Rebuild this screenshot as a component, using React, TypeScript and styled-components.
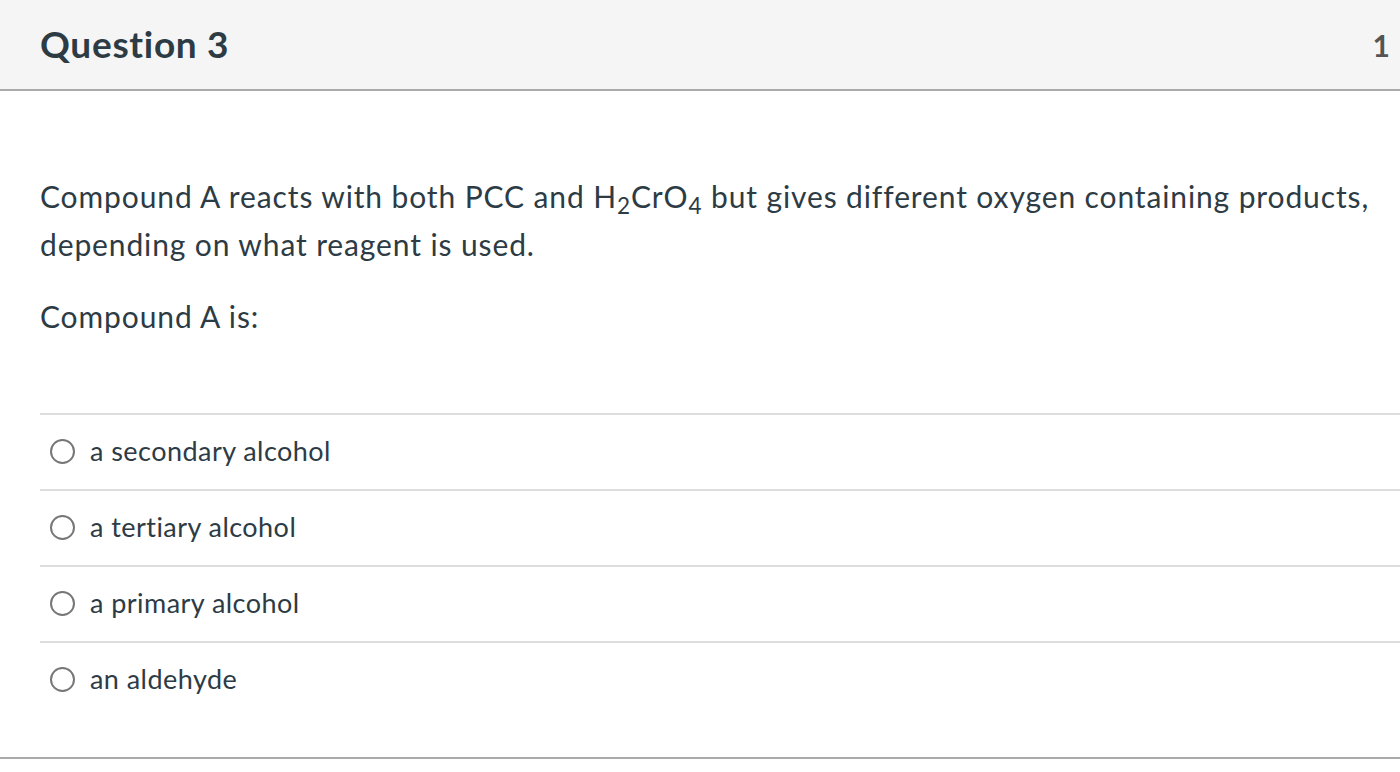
import React from "react";
import styled, { createGlobalStyle } from "styled-components";

const GlobalStyle = createGlobalStyle`
  html, body {
    margin: 0;
    padding: 0;
    background: #ffffff;
    font-family: Lato, "Liberation Sans", sans-serif;
    color: #2d3b45;
  }
`;

const Page = styled.div`
  width: 1400px;
  overflow: hidden;
`;

const Header = styled.div`
  height: 89px;
  background: #f5f5f5;
  border-bottom: 2px solid #aaaaaa;
  display: flex;
  align-items: center;
  justify-content: space-between;
  padding: 0 10px 0 40px;
`;

const Title = styled.h2`
  margin: 0;
  font-size: 37px;
  font-weight: 700;
  letter-spacing: 0.7px;
  color: #2d3b45;
  position: relative;
  top: -1px;
`;

const Points = styled.span`
  font-size: 30px;
  font-weight: 700;
  color: #555555;
`;

const Body = styled.div`
  padding: 81px 0 0 40px;
  border-bottom: 2px solid #aaaaaa;
`;

const Text = styled.p`
  margin: 0 0 24px;
  font-size: 30px;
  line-height: 48px;
  letter-spacing: 0.88px;
  padding-right: 10px;
`;

const Sub = styled.sub`
  font-size: 0.75em;
  line-height: 0;
  vertical-align: -0.25em;
`;

const Answers = styled.div`
  margin-top: 73px;
  padding-bottom: 40px;
`;

const Answer = styled.label`
  display: flex;
  align-items: center;
  gap: 15px;
  height: 70px;
  padding: 0 0 4px 10px;
  border-top: 2px solid #dddddd;
  font-size: 27px;
  letter-spacing: 0.45px;
  cursor: pointer;
`;

const Radio = styled.span`
  width: 21px;
  height: 21px;
  border: 2px solid #777777;
  border-radius: 50%;
  flex: none;
  margin-top: 3px;
`;

const answers = [
  "a secondary alcohol",
  "a tertiary alcohol",
  "a primary alcohol",
  "an aldehyde",
];

export default function App() {
  return (
    <>
      <GlobalStyle />
      <Page>
        <Header>
          <Title>Question 3</Title>
          <Points>1</Points>
        </Header>
        <Body>
          <Text>
            Compound A reacts with both PCC and H<Sub>2</Sub>CrO<Sub>4</Sub> but
            gives different oxygen containing products, depending on what
            reagent is used.
          </Text>
          <Text>Compound A is:</Text>
          <Answers>
            {answers.map((a) => (
              <Answer key={a}>
                <Radio />
                {a}
              </Answer>
            ))}
          </Answers>
        </Body>
      </Page>
    </>
  );
}
